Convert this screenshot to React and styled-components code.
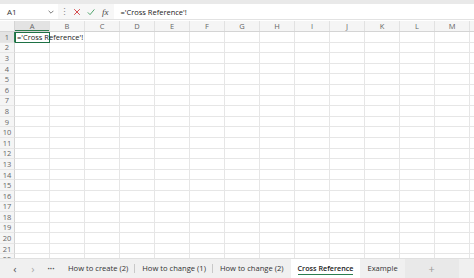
import styled, { createGlobalStyle } from "styled-components";

const COLUMNS = ["A", "B", "C", "D", "E", "F", "G", "H", "I", "J", "K", "L", "M"];
const ROWS = Array.from({ length: 22 }, (_, i) => i + 1);
const TABS = ["How to create (2)", "How to change (1)", "How to change (2)", "Cross Reference", "Example"];
const ACTIVE_TAB = "Cross Reference";

const GlobalStyle = createGlobalStyle`
  html, body { margin: 0; padding: 0; background: #fff; }
  body { font-family: "Open Sans", "Noto Sans", sans-serif; }
  * { box-sizing: border-box; }
`;

export default function App() {
  return (
    <>
      <GlobalStyle />
      <Window>
        <TopStrip />
        <FormulaBar>
          <NameBox>
            <span>A1</span>
            <Chevron viewBox="0 0 10 6"><path d="M1 1l4 4 4-4" /></Chevron>
          </NameBox>
          <Dots>⋮</Dots>
          <ActionIcon viewBox="0 0 10 10" $color="#d13438">
            <path d="M1.5 1.5l7 7M8.5 1.5l-7 7" />
          </ActionIcon>
          <ActionIcon viewBox="0 0 10 10" $color="#3a9a5a">
            <path d="M1 5.5l2.8 2.8L9.2 1.8" />
          </ActionIcon>
          <Fx>fx</Fx>
          <FormulaInput>='Cross Reference'!</FormulaInput>
        </FormulaBar>
        <Sheet>
          <HeaderRow>
            <Corner />
            {COLUMNS.map((c) => (
              <ColHeader key={c} $active={c === "A"}>{c}</ColHeader>
            ))}
            <ColFill />
          </HeaderRow>
          {ROWS.map((r) => (
            <Row key={r}>
              <RowHeader $active={r === 1}>{r}</RowHeader>
              {COLUMNS.map((c) => (
                <Cell key={c} $selected={r === 1 && c === "A"}>
                  {r === 1 && c === "A" && <CellText>='Cross Reference'!</CellText>}
                </Cell>
              ))}
              <CellFill />
            </Row>
          ))}
        </Sheet>
        <TabBar>
          <NavButton>‹</NavButton>
          <NavButton $dim>›</NavButton>
          <NavButton $bold>···</NavButton>
          {TABS.map((t, i) => (
            <Tab key={t} $active={t === ACTIVE_TAB} $sep={i < 2}>
              <TabLabel $active={t === ACTIVE_TAB}>{t}</TabLabel>
            </Tab>
          ))}
          <AddTab>+</AddTab>
        </TabBar>
      </Window>
    </>
  );
}

const Window = styled.div`
  width: 474px;
  height: 278px;
  display: flex;
  flex-direction: column;
  overflow: hidden;
  background: #fff;
`;

const TopStrip = styled.div`
  height: 4px;
  background: #e9e9e9;
  flex: none;
`;

const FormulaBar = styled.div`
  height: 16px;
  flex: none;
  display: flex;
  align-items: center;
  background: #f7f7f7;
  border-bottom: 1px solid #e2e2e2;
  font-size: 8px;
  color: #333;
`;

const NameBox = styled.div`
  width: 58px;
  height: 100%;
  display: flex;
  align-items: center;
  justify-content: space-between;
  padding: 0 4px 0 7px;
  background: #fff;
`;

const Chevron = styled.svg`
  width: 6px;
  height: 4px;
  fill: none;
  stroke: #555;
  stroke-width: 1.3;
`;

const Dots = styled.span`
  width: 12px;
  text-align: center;
  color: #888;
  font-size: 9px;
`;

const ActionIcon = styled.svg`
  width: 8px;
  height: 8px;
  margin: 0 3px;
  fill: none;
  stroke: ${(p) => p.$color};
  stroke-width: 1.1;
`;

const Fx = styled.span`
  margin: 0 5px 0 4px;
  font-family: "Liberation Serif", serif;
  font-style: italic;
  font-size: 9px;
  color: #444;
`;

const FormulaInput = styled.div`
  flex: 1;
  height: 100%;
  display: flex;
  align-items: center;
  padding-left: 7px;
  background: #fff;
  font-size: 7.5px;
  color: #222;
`;

const Sheet = styled.div`
  flex: 1;
  overflow: hidden;
  margin-top: 1px;
  font-size: 7.5px;
`;

const HeaderRow = styled.div`
  display: flex;
  height: 11px;
  background: #f5f5f5;
  border-bottom: 1px solid #d4d4d4;
`;

const Corner = styled.div`
  width: 15px;
  flex: none;
  border-right: 1px solid #d4d4d4;
`;

const ColHeader = styled.div`
  width: 35px;
  flex: none;
  display: flex;
  align-items: center;
  justify-content: center;
  color: #666;
  border-right: 1px solid #e2e2e2;
  background: ${(p) => (p.$active ? "#e3e3e3" : "transparent")};
  box-shadow: ${(p) => (p.$active ? "inset 0 -1px 0 #2c7d4f" : "none")};
`;

const ColFill = styled.div`
  flex: 1;
`;

const Row = styled.div`
  display: flex;
  height: 10.6px;
`;

const RowHeader = styled.div`
  width: 15px;
  flex: none;
  display: flex;
  align-items: center;
  justify-content: center;
  color: #666;
  background: ${(p) => (p.$active ? "#e3e3e3" : "#f5f5f5")};
  border-right: 1px solid ${(p) => (p.$active ? "#2c7d4f" : "#d4d4d4")};
  border-bottom: 1px solid #e6e6e6;
`;

const Cell = styled.div`
  position: relative;
  width: 35px;
  flex: none;
  border-right: 1px solid #e6e6e6;
  border-bottom: 1px solid #e6e6e6;
  ${(p) => p.$selected && "outline: 1.5px solid #1e7145; outline-offset: -1px; z-index: 1;"}
`;

const CellText = styled.span`
  position: absolute;
  left: 2px;
  top: 0;
  line-height: 10px;
  white-space: nowrap;
  color: #222;
  font-size: 7.5px;
`;

const CellFill = styled.div`
  flex: 1;
  border-bottom: 1px solid #e6e6e6;
`;

const TabBar = styled.div`
  height: 20px;
  flex: none;
  display: flex;
  align-items: stretch;
  background: #f0f0f0;
  border-top: 1px solid #e0e0e0;
  font-size: 7.6px;
  color: #333;
`;

const NavButton = styled.div`
  width: 18px;
  flex: none;
  display: flex;
  align-items: center;
  justify-content: center;
  font-size: ${(p) => (p.$bold ? "8px" : "11px")};
  font-weight: ${(p) => (p.$bold ? 700 : 400)};
  color: ${(p) => (p.$dim ? "#aaa" : "#555")};
  &:first-child { margin-left: 6px; }
  &:nth-child(3) { margin-right: 1px; }
`;

const Tab = styled.div`
  position: relative;
  display: flex;
  align-items: center;
  padding: 0 7px;
  background: ${(p) => (p.$active ? "#fff" : "transparent")};
  &::after {
    content: "";
    display: ${(p) => (p.$sep ? "block" : "none")};
    position: absolute;
    right: 0;
    top: 5px;
    bottom: 5px;
    border-right: 1px solid #c8c8c8;
  }
`;

const TabLabel = styled.span`
  white-space: nowrap;
  font-size: ${(p) => (p.$active ? "7.2px" : "7.6px")};
  font-weight: ${(p) => (p.$active ? 600 : 400)};
  color: ${(p) => (p.$active ? "#1a1a1a" : "#333")};
  padding-bottom: 1px;
  border-bottom: 1.5px solid ${(p) => (p.$active ? "#2c7d4f" : "transparent")};
`;

const AddTab = styled.div`
  width: 54px;
  flex: none;
  display: flex;
  align-items: center;
  justify-content: center;
  font-size: 11px;
  color: #999;
  background: #e9e9e9;
`;
